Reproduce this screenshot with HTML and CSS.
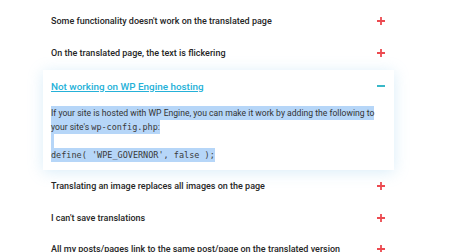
FILE: index.html
```html
<!DOCTYPE html>
<html>
<head>
  <title>FAQ</title>
  <link rel="stylesheet" href="styles.css">
</head>
<body>
  <div class="faq">
    <div class="item">
      <span class="q">Some functionality doesn't work on the translated page</span>
      <svg class="icon" viewBox="0 0 8 8"><path d="M4 0V8M0 4H8" class="plus"/></svg>
    </div>
    <div class="item">
      <span class="q">On the translated page, the text is flickering</span>
      <svg class="icon" viewBox="0 0 8 8"><path d="M4 0V8M0 4H8" class="plus"/></svg>
    </div>

    <div class="card">
      <div class="item">
        <a class="q link" href="#">Not working on WP Engine hosting</a>
        <svg class="icon" viewBox="0 0 8 8"><path d="M0 4H8" class="minus"/></svg>
      </div>
      <div class="answer">
        <div class="sel">If your site is hosted with WP Engine, you can make it work by adding the following to</div>
        <div class="sel">your site's <code>wp-config.php</code>:</div>
        <div class="sel stub"></div>
        <div class="sel"><code>define( 'WPE_GOVERNOR', false );</code></div>
      </div>
    </div>

    <div class="item">
      <span class="q">Translating an image replaces all images on the page</span>
      <svg class="icon" viewBox="0 0 8 8"><path d="M4 0V8M0 4H8" class="plus"/></svg>
    </div>
    <div class="item">
      <span class="q">I can't save translations</span>
      <svg class="icon" viewBox="0 0 8 8"><path d="M4 0V8M0 4H8" class="plus"/></svg>
    </div>
    <div class="item last">
      <span class="q">All my posts/pages link to the same post/page on the translated version</span>
      <svg class="icon" viewBox="0 0 8 8"><path d="M4 0V8M0 4H8" class="plus"/></svg>
    </div>
  </div>
</body>
</html>
```

FILE: styles.css
```css
body {
  margin: 0;
  background-color: #fff;
  font-family: Roboto, "Noto Sans", sans-serif;
  color: #262626;
  overflow: hidden;
}

.faq {
  width: 351px;
  margin-left: 43px;
  padding-top: 5px;
}

.item {
  display: flex;
  align-items: center;
  justify-content: space-between;
  height: 32px;
  padding: 0 9px 0 8px;
}

.item.last {
  height: 30px;
}

.q {
  font-size: 9px;
  font-weight: 500;
  white-space: nowrap;
}

.link {
  font-size: 9.9px;
  color: #25b1d8;
  text-decoration: underline;
  text-underline-offset: 1px;
}

.icon {
  width: 8px;
  height: 8px;
  flex-shrink: 0;
}

.plus {
  stroke: #ec4a50;
  stroke-width: 1.8;
}

.minus {
  stroke: #23b0c2;
  stroke-width: 1.8;
}

.card {
  background-color: #fff;
  box-shadow: 0 2px 14px rgba(120, 190, 235, 0.28);
  margin-top: 1px;
}

.answer {
  padding: 4px 8px 8px 8px;
  font-size: 8.6px;
  line-height: 14px;
  color: #333;
}

.sel {
  width: fit-content;
  height: 14px;
  background-color: #b6d6f8;
  white-space: nowrap;
}

.stub {
  width: 3px;
}

code {
  font-family: "DejaVu Sans Mono", monospace;
  font-size: 8.5px;
  color: #3a3a3a;
}
```
